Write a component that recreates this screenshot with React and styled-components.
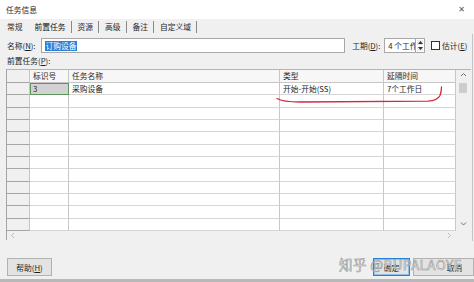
import React from 'react';
import styled, { createGlobalStyle } from 'styled-components';

const GlobalStyle = createGlobalStyle`
  html, body {
    margin: 0;
    padding: 0;
    width: 474px;
    height: 282px;
    overflow: hidden;
    background: #f0f0f0;
  }

  body {
    font-family: 'Noto Sans CJK SC', 'Liberation Sans', sans-serif;
    font-size: 7.75px;
    color: #1e1e1e;
  }

  u {
    text-decoration-thickness: 0.6px;
    text-underline-offset: 1px;
  }
`;

const StyledDialog = styled.div`
  position: relative;
  display: flex;
  flex-direction: column;
  width: 474px;
  height: 282px;
  background: #f0f0f0;
  overflow: hidden;
`;

const StyledTitleBar = styled.div`
  display: flex;
  align-items: center;
  justify-content: space-between;
  height: 19px;
  padding: 0 9px 1px 6px;
  box-sizing: border-box;
  background: #ffffff;

  .close {
    font-family: 'DejaVu Sans', sans-serif;
    font-size: 8px;
    color: #555;
  }
`;

const StyledTabStrip = styled.div`
  display: flex;
  align-items: center;
  height: 15px;
  padding-left: 1px;
`;

const StyledTab = styled.div`
  height: 12px;
  line-height: 12px;
  padding: 0 5px 0 6px;
  border-right: ${({ sep }) => (sep ? '1px solid #8a8a8a' : '1px solid transparent')};
  color: ${({ active }) => (active ? '#111' : '#2a2a2a')};
`;

const StyledPanel = styled.div`
  display: flex;
  flex-direction: column;
  width: 472px;
  height: 207px;
  border-right: 1px solid #c4c4c4;
`;

const StyledNameRow = styled.div`
  display: flex;
  align-items: center;
  height: 15px;
  margin-top: 4px;
  padding-left: 7px;
`;

const StyledLabel = styled.span`
  width: ${({ w }) => w}px;
  flex-shrink: 0;
  white-space: nowrap;
`;

const StyledInput = styled.div`
  display: flex;
  align-items: center;
  width: ${({ w }) => w}px;
  height: 15px;
  box-sizing: border-box;
  padding-left: 3px;
  background: #fff;
  border: 1px solid #a8a8a8;
  overflow: hidden;
  white-space: nowrap;

  .sel {
    background: #2b7fd6;
    color: #fff;
    line-height: 10px;
    padding: 0 0.5px;
  }
`;

const StyledSpinner = styled.div`
  display: flex;
  flex-direction: column;
  width: 9px;
  height: 15px;
  box-sizing: border-box;
  border: 1px solid #a8a8a8;
  border-left: none;
  margin-right: 6px;
  background: #fff;

  span {
    flex: 1;
    display: flex;
    align-items: center;
    justify-content: center;
    background: #ececec;
    margin: 1px;
  }
`;

const StyledCheckbox = styled.div`
  width: 7px;
  height: 7px;
  margin-right: 2px;
  border: 1px solid #333;
  background: #fff;
`;

const StyledSubLabel = styled.div`
  height: 10px;
  line-height: 10px;
  margin: 3px 0 3px 7px;
`;

const StyledGridFrame = styled.div`
  display: flex;
  flex-direction: column;
  width: 464px;
  margin-left: 6px;
  border-left: 1px solid #a4a4a4;
  border-top: 1px solid #b4b4b4;
`;

const StyledGridBody = styled.div`
  display: flex;
  height: 160px;
`;

const StyledTable = styled.div`
  display: grid;
  grid-template-columns: 23px 39px 211px 104px 72px;
  grid-template-rows: 13px repeat(12, 12.333px);
  width: 449px;
  background: #fff;
`;

const StyledCell = styled.div`
  position: relative;
  box-sizing: border-box;
  padding-left: 3px;
  line-height: 11px;
  white-space: nowrap;
  overflow: hidden;
  border-right: 1px solid #c6c6c6;
  border-bottom: 1px solid ${({ head }) => (head ? '#a6a6a6' : '#d6d6d6')};
  background: ${({ head, selected }) => (selected ? '#d2d2d2' : head ? '#f0f0f0' : '#fff')};
  outline: ${({ selected }) => (selected ? '1px solid #5c965c' : 'none')};
  outline-offset: -1px;
`;

const StyledHeaderCell = styled(StyledCell)`
  background: #f7f7f7;
  border-bottom: 1px solid #c6c6c6;
  line-height: 12px;
`;

const StyledVScroll = styled.div`
  display: flex;
  flex-direction: column;
  align-items: center;
  width: 14px;
  background: #f0f0f0;

  .thumb {
    width: 8px;
    height: 10px;
    margin-top: 3px;
    background: #cdcdcd;
  }

  .spacer {
    flex: 1;
  }
`;

const StyledArrow = styled.div`
  display: flex;
  align-items: center;
  justify-content: center;
  width: 13px;
  height: ${({ h }) => h || 10}px;
`;

const StyledHScroll = styled.div`
  display: flex;
  align-items: center;
  justify-content: space-between;
  height: 10px;
  padding: 0 18px 0 3px;
  background: #f0f0f0;
`;

const StyledFooter = styled.div`
  display: flex;
  align-items: center;
  height: 18px;
  margin-top: 17px;
  padding-left: 7px;
`;

const StyledButton = styled.div`
  display: flex;
  align-items: center;
  justify-content: center;
  width: ${({ w }) => w}px;
  height: 18px;
  box-sizing: border-box;
  margin-left: ${({ ml }) => ml || 0}px;
  padding-left: ${({ pl }) => pl || 0}px;
  background: #e3e3e3;
  border: 1px solid ${({ primary }) => (primary ? '#2a7fd4' : '#b2b2b2')};
  box-shadow: ${({ primary }) => (primary ? 'inset 0 0 0 1px #8cc0ee' : 'none')};
`;

const StyledSpacer = styled.div`
  flex: 1;
`;

const StyledBottomBar = styled.div`
  margin-top: auto;
  height: 3px;
  background: #b8b8b8;
`;

const StyledWatermark = styled.div`
  position: absolute;
  left: 339px;
  top: 254px;
  font-family: 'Noto Sans CJK SC', 'Liberation Sans', sans-serif;
  font-size: 13.5px;
  letter-spacing: 0.4px;
  color: rgba(255, 255, 255, 0.88);
  -webkit-text-stroke: 0.6px rgba(110, 110, 110, 0.75);
  white-space: nowrap;
`;

const StyledMark = styled.svg`
  position: absolute;
  left: 0;
  top: 0;
  pointer-events: none;
`;

const Chevron = ({ dir }) => {
  const paths = {
    up: 'M1 4 L3.5 1.5 L6 4',
    down: 'M1 1.5 L3.5 4 L6 1.5',
    left: 'M4 1 L1.5 3.5 L4 6',
    right: 'M2 1 L4.5 3.5 L2 6',
  };
  const faint = dir === 'left' || dir === 'right';
  return (
    <svg width="7" height="7" viewBox="0 0 7 7">
      <path d={paths[dir]} fill="none" stroke={faint ? '#b8b8b8' : '#606060'} strokeWidth="0.9" />
    </svg>
  );
};

const Triangle = ({ up }) => (
  <svg width="5" height="3" viewBox="0 0 5 3">
    <path d={up ? 'M0 3 L2.5 0 L5 3 Z' : 'M0 0 L2.5 3 L5 0 Z'} fill="#333" />
  </svg>
);

const tabs = ['常规', '前置任务', '资源', '高级', '备注', '自定义域'];

const rows = [{ id: '3', name: '采购设备', type: '开始-开始(SS)', lag: '7个工作日' }];

const App = () => {
  const allRows = Array.from({ length: 12 }, (_, i) => rows[i] || {});

  return (
    <>
      <GlobalStyle />
      <StyledDialog>
        <StyledTitleBar>
          <span>任务信息</span>
          <span className="close">✕</span>
        </StyledTitleBar>

        <StyledTabStrip>
          {tabs.map((t, i) => (
            <StyledTab key={t} sep={i > 0} active={i === 1}>
              {t}
            </StyledTab>
          ))}
        </StyledTabStrip>

        <StyledPanel>
          <StyledNameRow>
            <StyledLabel w={34}>
              名称(<u>N</u>):
            </StyledLabel>
            <StyledInput w={305}>
              <span className="sel">订购设备</span>
            </StyledInput>
            <StyledLabel w={32} style={{ marginLeft: 7 }}>
              工期(<u>D</u>):
            </StyledLabel>
            <StyledInput w={32}>4 个工作日</StyledInput>
            <StyledSpinner>
              <span>
                <Triangle up />
              </span>
              <span>
                <Triangle />
              </span>
            </StyledSpinner>
            <StyledCheckbox />
            <StyledLabel w={30}>
              估计(<u>E</u>)
            </StyledLabel>
          </StyledNameRow>

          <StyledSubLabel>
            前置任务(<u>P</u>):
          </StyledSubLabel>

          <StyledGridFrame>
            <StyledGridBody>
              <StyledTable>
                <StyledCell head />
                <StyledHeaderCell>标识号</StyledHeaderCell>
                <StyledHeaderCell>任务名称</StyledHeaderCell>
                <StyledHeaderCell>类型</StyledHeaderCell>
                <StyledHeaderCell>延隔时间</StyledHeaderCell>
                {allRows.map((r, i) => (
                  <React.Fragment key={i}>
                    <StyledCell head />
                    <StyledCell selected={i === 0}>{r.id}</StyledCell>
                    <StyledCell>{r.name}</StyledCell>
                    <StyledCell>{r.type}</StyledCell>
                    <StyledCell>{r.lag}</StyledCell>
                  </React.Fragment>
                ))}
              </StyledTable>
              <StyledVScroll>
                <StyledArrow>
                  <Chevron dir="up" />
                </StyledArrow>
                <div className="thumb" />
                <div className="spacer" />
                <StyledArrow h={12}>
                  <Chevron dir="down" />
                </StyledArrow>
              </StyledVScroll>
            </StyledGridBody>
            <StyledHScroll>
              <Chevron dir="left" />
              <Chevron dir="right" />
            </StyledHScroll>
          </StyledGridFrame>
        </StyledPanel>

        <StyledFooter>
          <StyledButton w={45}>
            帮助(<u>H</u>)
          </StyledButton>
          <StyledSpacer />
          <StyledButton w={37} primary>
            确定
          </StyledButton>
          <StyledButton w={61} ml={3} pl={22}>
            取消
          </StyledButton>
        </StyledFooter>

        <StyledBottomBar />

        <StyledMark width="474" height="282" viewBox="0 0 474 282">
          <path
            d="M277 98.5 C281 101, 288 102, 300 102 L428 101.2 C433 100.8, 438 99.5, 440 95.5 C441.2 92.5, 441.5 90, 441.5 87"
            fill="none"
            stroke="#d42a40"
            strokeWidth="1.3"
            strokeLinecap="round"
          />
        </StyledMark>

        <StyledWatermark>知乎 @BUPALAOYE</StyledWatermark>
      </StyledDialog>
    </>
  );
};

export default App;
